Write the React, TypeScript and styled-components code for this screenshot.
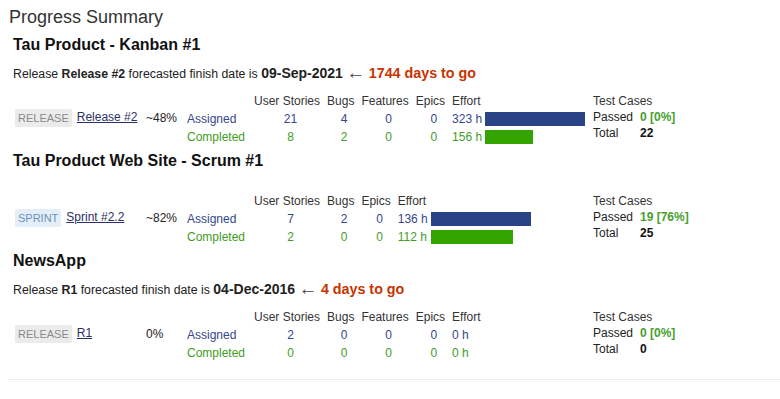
import React from "react";
import styled, { createGlobalStyle } from "styled-components";

const GlobalStyle = createGlobalStyle`
  html, body { margin: 0; padding: 0; background: #fff; }
  body { font-family: "Liberation Sans", Arial, sans-serif; font-size: 12px; color: #222; }
`;

type Project = {
  name: string;
  release: { name: string; date: string; days: string } | null;
  badge: "RELEASE" | "SPRINT";
  link: string;
  pct: string;
  cols: string[];
  assigned: number[];
  completed: number[];
  effA: number;
  effC: number;
  passed: string;
  total: number;
};

const projects: Project[] = [
  {
    name: "Tau Product - Kanban #1",
    release: { name: "Release #2", date: "09-Sep-2021", days: "1744 days to go" },
    badge: "RELEASE",
    link: "Release #2",
    pct: "~48%",
    cols: ["User Stories", "Bugs", "Features", "Epics"],
    assigned: [21, 4, 0, 0],
    completed: [8, 2, 0, 0],
    effA: 323,
    effC: 156,
    passed: "0 [0%]",
    total: 22,
  },
  {
    name: "Tau Product Web Site - Scrum #1",
    release: null,
    badge: "SPRINT",
    link: "Sprint #2.2",
    pct: "~82%",
    cols: ["User Stories", "Bugs", "Epics"],
    assigned: [7, 2, 0],
    completed: [2, 0, 0],
    effA: 136,
    effC: 112,
    passed: "19 [76%]",
    total: 25,
  },
  {
    name: "NewsApp",
    release: { name: "R1", date: "04-Dec-2016", days: "4 days to go" },
    badge: "RELEASE",
    link: "R1",
    pct: "0%",
    cols: ["User Stories", "Bugs", "Features", "Epics"],
    assigned: [2, 0, 0, 0],
    completed: [0, 0, 0, 0],
    effA: 0,
    effC: 0,
    passed: "0 [0%]",
    total: 0,
  },
];

const Page = styled.div`
  padding: 6px 0 0 8px;
`;

const Title = styled.h1`
  margin: 0 0 7px 1px;
  font-size: 18px;
  line-height: 22px;
  font-weight: normal;
  color: #333;
`;

const Section = styled.section`
  padding-left: 5px;
  & + & { margin-top: 5px; }
`;

const ProjectTitle = styled.h2`
  margin: 0;
  font-size: 16px;
  line-height: 20px;
  font-weight: bold;
  color: #111;
`;

const ReleaseLine = styled.div<{ $empty?: boolean }>`
  margin: 9px 0 10px 0;
  height: ${(p) => (p.$empty ? "2px" : "18px")};
  line-height: 18px;
  font-size: 12.3px;
  color: #222;
  white-space: nowrap;
`;

const Strong = styled.b`
  font-weight: bold;
  color: #222;
`;

const DateText = styled.b`
  font-size: 14px;
  font-weight: bold;
  color: #222;
`;

const Arrow = styled.span`
  color: #444;
  font-size: 19px;
  line-height: 10px;
  position: relative;
  top: 1px;
`;

const Days = styled.b`
  font-size: 14.3px;
  font-weight: bold;
  color: #c83300;
`;

const ProgressRow = styled.div`
  display: grid;
  grid-template-columns: 131px 41px 406px auto;
  align-items: start;
  margin-left: 2px;
`;

const EntityCell = styled.div`
  display: flex;
  align-items: center;
  gap: 5px;
  margin-top: 17px;
  height: 18px;
`;

const Badge = styled.span<{ $kind: "RELEASE" | "SPRINT" }>`
  display: inline-flex;
  align-items: center;
  height: 18px;
  padding: 0 3px;
  border-radius: 2px;
  font-size: 11px;
  background: ${(p) => (p.$kind === "SPRINT" ? "#e4eef8" : "#ebebeb")};
  color: ${(p) => (p.$kind === "SPRINT" ? "#6b92b8" : "#8a8a8a")};
`;

const EntityLink = styled.a`
  color: #2c3066;
  text-decoration: underline;
  font-size: 12px;
  margin-top: -3px;
  cursor: pointer;
`;

const Percent = styled.div`
  margin-top: 17px;
  height: 18px;
  line-height: 18px;
  color: #222;
`;

const Stats = styled.div<{ $cols: number }>`
  display: grid;
  grid-template-columns: 67px repeat(${(p) => p.$cols}, auto) auto 1fr;
  grid-auto-rows: 18px;
  align-items: center;
  justify-content: start;
`;

const HeadCell = styled.div`
  padding-right: 7px;
  color: #333;
  white-space: nowrap;
`;

const Label = styled.div<{ $done?: boolean }>`
  color: ${(p) => (p.$done ? "#3f9d1f" : "#34478c")};
`;

const Num = styled.div<{ $done?: boolean }>`
  text-align: center;
  color: ${(p) => (p.$done ? "#3f9d1f" : "#34478c")};
`;

const Effort = styled.div<{ $done?: boolean }>`
  padding-right: 3px;
  white-space: nowrap;
  color: ${(p) => (p.$done ? "#3f9d1f" : "#34478c")};
`;

const EffortHead = styled.div`
  padding-right: 3px;
  color: #333;
`;

const Bar = styled.div<{ $done?: boolean }>`
  height: 14px;
  background: ${(p) => (p.$done ? "#33a300" : "#2a4387")};
`;

const Spacer = styled.div``;

const Tests = styled.div`
  display: grid;
  grid-template-columns: 47px auto;
  grid-auto-rows: 16px;
  align-items: center;
  padding-top: 1px;
  color: #222;
`;

const TestsTitle = styled.div`
  grid-column: 1 / -1;
  color: #333;
`;

const Passed = styled.b`
  color: #47a02f;
  font-weight: bold;
`;

const Total = styled.b`
  color: #111;
  font-weight: bold;
`;

const Divider = styled.div`
  margin-top: 17px;
  border-top: 1px solid #ececec;
`;

function ProjectBlock({ p }: { p: Project }) {
  const maxEff = Math.max(p.effA, p.effC, 1);
  const barW = (v: number) => (p.effA > 0 ? Math.round((v / maxEff) * 100) : 0);
  return (
    <Section>
      <ProjectTitle>{p.name}</ProjectTitle>
      {p.release ? (
        <ReleaseLine>
          Release <Strong>{p.release.name}</Strong> forecasted finish date is{" "}
          <DateText>{p.release.date}</DateText> <Arrow>←</Arrow> <Days>{p.release.days}</Days>
        </ReleaseLine>
      ) : (
        <ReleaseLine $empty />
      )}
      <ProgressRow>
        <EntityCell>
          <Badge $kind={p.badge}>{p.badge}</Badge>
          <EntityLink>{p.link}</EntityLink>
        </EntityCell>
        <Percent>{p.pct}</Percent>
        <Stats $cols={p.cols.length}>
          <Spacer />
          {p.cols.map((c) => (
            <HeadCell key={c}>{c}</HeadCell>
          ))}
          <EffortHead>Effort</EffortHead>
          <Spacer />

          <Label>Assigned</Label>
          {p.assigned.map((v, i) => (
            <Num key={i}>{v}</Num>
          ))}
          <Effort>{p.effA} h</Effort>
          <div>{barW(p.effA) > 0 && <Bar style={{ width: barW(p.effA) }} />}</div>

          <Label $done>Completed</Label>
          {p.completed.map((v, i) => (
            <Num key={i} $done>
              {v}
            </Num>
          ))}
          <Effort $done>{p.effC} h</Effort>
          <div>{barW(p.effC) > 0 && <Bar $done style={{ width: barW(p.effC) }} />}</div>
        </Stats>
        <Tests>
          <TestsTitle>Test Cases</TestsTitle>
          <span>Passed</span>
          <Passed>{p.passed}</Passed>
          <span>Total</span>
          <Total>{p.total}</Total>
        </Tests>
      </ProgressRow>
    </Section>
  );
}

export default function App() {
  return (
    <>
      <GlobalStyle />
      <Page>
        <Title>Progress Summary</Title>
        {projects.map((p) => (
          <ProjectBlock key={p.name} p={p} />
        ))}
        <Divider />
      </Page>
    </>
  );
}
